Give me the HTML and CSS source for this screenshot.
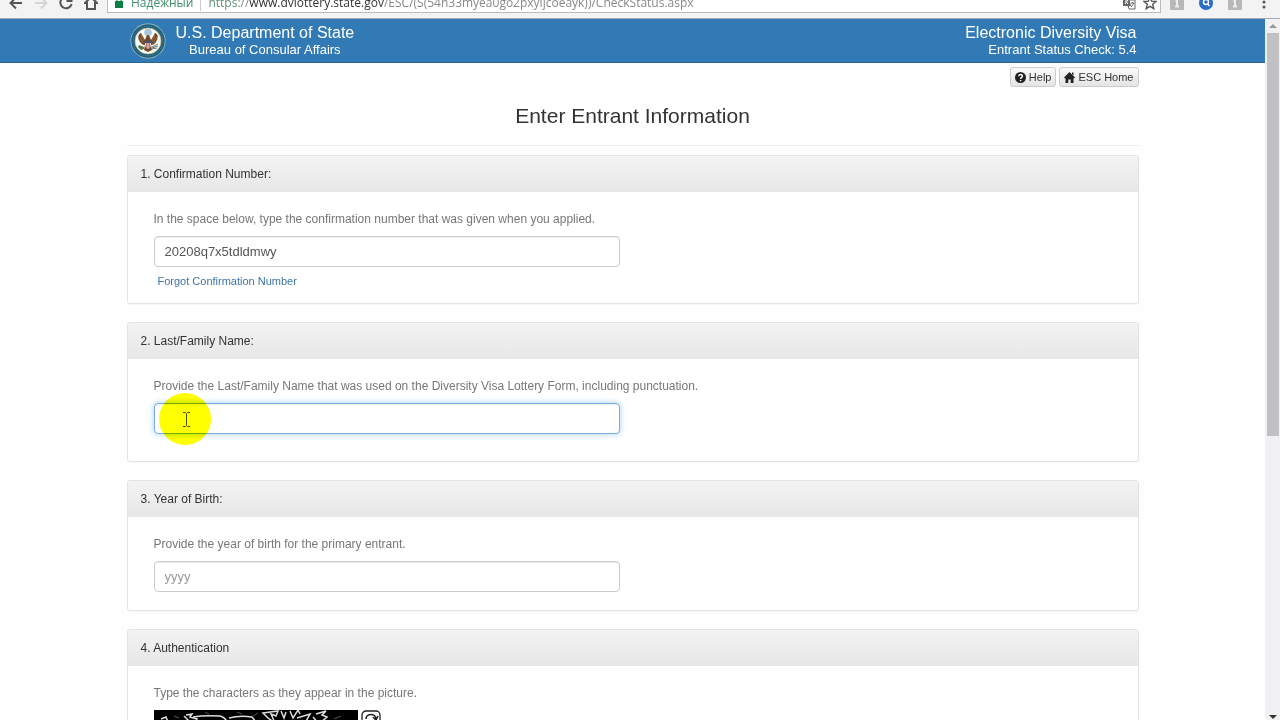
FILE: index.html
```html
<!DOCTYPE html>
<html lang="en">
<head>
  <meta charset="UTF-8">
  <meta name="viewport" content="width=device-width, initial-scale=1.0">
  <title>Entrant Status Check</title>
  <link rel="stylesheet" href="styles.css">
</head>
<body>
  <div class="toolbar">
    <div class="nav-icons">
      <button class="tool-btn" aria-label="Back"><svg width="14" height="14" viewBox="0 0 14 14"><path d="M13 7H2M7 1.500L1.500 7L7 12.500"/></svg></button>
      <button class="tool-btn faded" aria-label="Forward"><svg width="14" height="14" viewBox="0 0 14 14"><path d="M1 7H12M7 1.500L12.500 7L7 12.500"/></svg></button>
      <button class="tool-btn" aria-label="Reload"><svg width="14" height="14" viewBox="0 0 14 14"><path d="M11.500 3A5.700 5.700 0 1 0 12.600 8M12.500 0V5H7.500"/></svg></button>
      <button class="tool-btn" aria-label="Home"><svg width="14" height="14" viewBox="0 0 14 14"><path d="M1 7L7 1L13 7H11V13H3V7Z"/></svg></button>
    </div>
    <div class="omnibox">
      <svg class="lock" width="9" height="12" viewBox="0 0 9 12"><path d="M0 4H8V11H0Z" fill="#0b8043"/><path d="M2 4V2A2 2 0 0 1 6 2V4" fill="none" stroke="#0b8043"/></svg>
      <span class="secure">Надежный</span>
      <span class="divider"></span>
      <span class="url"><span class="scheme">https</span>://<span class="host">www.dvlottery.state.gov</span>/ESC/(S(54n33myea0go2pxyijcoeayk))/CheckStatus.aspx</span>
      <button class="tool-btn" aria-label="Translate"><svg width="14" height="14" viewBox="0 0 14 14"><path d="M5 4H13V13H7Z" fill="#fff" stroke="#666" stroke-width="1"/><path d="M1 1H7L9 10H1Z" fill="#666" stroke="none"/><path d="M3 4H6M4.500 3V4M3 8L6 4M3.500 5L6 8" stroke="#fff" stroke-width="1"/><path d="M9 7H12M10.500 6V7M9 11L12 7" stroke="#666" stroke-width="1"/></svg></button>
      <button class="tool-btn" aria-label="Bookmark"><svg width="14" height="14" viewBox="0 0 14 14"><path d="M7 1L8.700 5.200L13 5.500L9.700 8.300L10.800 12.700L7 10.300L3.200 12.700L4.300 8.300L1 5.500L5.300 5.200Z" stroke-width="1.400"/></svg></button>
    </div>
    <div class="ext-icons">
      <button class="tool-btn" aria-label="Extension"><svg width="14" height="14" viewBox="0 0 14 14"><rect width="14" height="14" rx="1" fill="#b8b8b8" stroke="none"/><path d="M5.500 5H7V10M5 10.500H9" stroke="#eee"/></svg></button>
      <button class="tool-btn" aria-label="Search extension"><svg width="14" height="14" viewBox="0 0 14 14"><circle cx="7" cy="7" r="7" fill="#2b6cc4" stroke="none"/><circle cx="7" cy="6" r="2.500" stroke="#fff" stroke-width="1.400"/><path d="M8.500 8L10.500 10" stroke="#fff" stroke-width="1.400"/></svg></button>
      <button class="tool-btn" aria-label="Extension"><svg width="14" height="14" viewBox="0 0 14 14"><rect width="14" height="14" rx="1" fill="#b8b8b8" stroke="none"/><path d="M5.500 5H7V10M5 10.500H9" stroke="#eee"/></svg></button>
      <button class="tool-btn" aria-label="Menu"><svg width="14" height="14" viewBox="0 0 14 14"><g fill="#555" stroke="none"><circle cx="7" cy="1" r="1.500"/><circle cx="7" cy="6" r="1.500"/><circle cx="7" cy="11" r="1.500"/></g></svg></button>
    </div>
  </div>

  <div class="viewport">
    <div class="page">
      <header class="banner">
        <div class="container banner-row">
          <div class="brand">
            <svg class="seal" width="36" height="36" viewBox="0 0 36 36">
              <circle cx="18" cy="18" r="17.500" fill="#a9cbc4"/>
              <circle cx="18" cy="18" r="16.800" fill="#205f7b"/>
              <circle cx="18" cy="18" r="14.800" fill="none" stroke="#5c909f" stroke-width="1" stroke-dasharray="1 1.500"/>
              <circle cx="18" cy="18" r="13" fill="#fbfbf5" stroke="#c8b887" stroke-width=".7"/>
              <circle cx="18" cy="9.500" r="3.800" fill="#a9c8dc"/>
              <path d="M16.500 13C17 11.500 19.500 11.500 19.500 13.500L21 17L25 10C29 11 28 16 26 19C25 21 23 22 21 22L22 27L18 29L14 27L15 22C12 22 10.500 20 9.500 18C7.500 15 8 11 11 10L15 17Z" fill="#70482d"/>
              <path d="M11 12L14 18M9.500 14L13 20M25 12L22 18M27 14L23 20" stroke="#ae8153" stroke-width=".7"/>
              <path d="M15 18H21V22C21 24 19 25.500 18 26C17 25.500 15 24 15 22Z" fill="#f1dcd8"/>
              <path d="M15 18H21V20H15Z" fill="#36547e"/>
              <path d="M16.500 20V24.500M18 20V26M19.500 20V24.500" stroke="#b94e4d" stroke-width=".8"/>
              <path d="M14 24L9 22L8 24L11 27L14 26Z" fill="#54774f"/>
              <path d="M22 24L28 21M22 25L28 23M22 26L27 25" stroke="#5b6b70" stroke-width=".9"/>
            </svg>
            <div class="brand-text">
              <div class="name">U.S. Department of State</div>
              <div class="sub">Bureau of Consular Affairs</div>
            </div>
          </div>
          <div class="app-title">
            <div class="name">Electronic Diversity Visa</div>
            <div class="sub">Entrant Status Check: 5.4</div>
          </div>
        </div>
      </header>

      <main class="container">
        <div class="actions">
          <button class="btn"><svg width="11" height="11" viewBox="0 0 11 11"><circle cx="5.500" cy="5.500" r="5.500" fill="#222"/><path d="M3.700 4.200C3.700 1.900 7.400 1.900 7.400 4.100C7.400 5.400 5.600 5.300 5.600 6.900M5.600 7.900V9.200" fill="none" stroke="#fff" stroke-width="1.400"/></svg>Help</button>
          <button class="btn"><svg width="11" height="11" viewBox="0 0 11 11"><path d="M5.500 0L11 5.500L10 6.500L9.500 6V11H6.700V7.500H4.300V11H1.500V6L1 6.500L0 5.500ZM8 .5H9.500V3.500L8 2Z" fill="#222"/></svg>ESC Home</button>
        </div>
        <h1>Enter Entrant Information</h1>

        <form>
          <section class="panel">
            <h2 class="panel-heading">1. Confirmation Number:</h2>
            <div class="panel-body has-link">
              <div class="hint"><label for="confirmation">In the space below, type the confirmation number that was given when you applied.</label></div>
              <div class="field">
                <input type="text" id="confirmation" value="20208q7x5tdldmwy">
                <a class="forgot" href="#">Forgot Confirmation Number</a>
              </div>
            </div>
          </section>

          <section class="panel">
            <h2 class="panel-heading">2. Last/Family Name:</h2>
            <div class="panel-body has-message">
              <div class="hint"><label for="lastname">Provide the Last/Family Name that was used on the Diversity Visa Lottery Form, including punctuation.</label></div>
              <div class="field">
                <input type="text" id="lastname" class="focused">
                <div class="pointer">
                  <svg width="7" height="15" viewBox="0 0 7 15"><path d="M0 .5H2.500L3.500 1.500L4.500 .5H7M3.500 1.500V13.500M0 14.500H2.500L3.500 13.500L4.500 14.500H7" fill="none" stroke="#4d4d00"/></svg>
                </div>
              </div>
            </div>
          </section>

          <section class="panel">
            <h2 class="panel-heading">3. Year of Birth:</h2>
            <div class="panel-body">
              <div class="hint"><label for="birthyear">Provide the year of birth for the primary entrant.</label></div>
              <div class="field">
                <input type="text" id="birthyear" placeholder="yyyy">
              </div>
            </div>
          </section>

          <section class="panel">
            <h2 class="panel-heading">4. Authentication</h2>
            <div class="panel-body">
              <div class="hint">Type the characters as they appear in the picture.</div>
              <div class="field captcha">
                <svg width="204" height="50" viewBox="0 0 204 50">
                  <rect width="204" height="50" fill="#000"/>
                  <g fill="none" stroke="#ddd" stroke-width="1.500">
                    <path d="M7 9L12 7L14 12M32 5L38 4L36 7L43 9L40 14L35 11L30 6"/>
                    <path d="M39 7Q50 5 66 6Q71 7 73 12M75 8Q86 5 98 7L102 12M48 14H62M81 14L92 11"/>
                    <path d="M109 3L124 1L122 6L117 4L121 13L114 8ZM127 1L130 8L132 2M136 1L139 8L144 0L146 4"/>
                    <path d="M143 8L156 4L151 13M162 4L172 1L168 5L173 7L165 14L159 7"/>
                  </g>
                  <path d="M20 6L25 8M51 2L55 4M83 2L88 4M99 6L104 3M180 9L187 6" stroke="#555"/>
                </svg>
                <button type="button" class="captcha-help" aria-label="New picture"><svg width="20" height="20" viewBox="0 0 20 20"><rect x="1" y="1" width="18" height="18" rx="4" fill="#fff" stroke="#222" stroke-width="1.300"/><path d="M5 9C5 3 15 3 15 9M12 7L15 10L17 6M15 11C15 17 5 17 5 11" fill="none" stroke="#222" stroke-width="1.600"/></svg></button>
              </div>
            </div>
          </section>
        </form>
      </main>
    </div>

    <div class="scrollbar">
      <span class="arrow up"></span>
      <span class="thumb"></span>
      <span class="arrow down"></span>
    </div>
  </div>
</body>
</html>
```

FILE: styles.css
```css
* { box-sizing: border-box; }

body {
  margin: 0;
  height: 100vh;
  display: flex;
  flex-direction: column;
  overflow: hidden;
  font-family: "Liberation Sans", Arial, sans-serif;
  font-size: 12px;
  line-height: 18px;
  color: #333;
  background: #fefefe;
}

svg { display: block; }

/* browser toolbar */
.toolbar {
  display: flex;
  align-items: flex-end;
  flex: none;
  height: 19px;
  padding: 0 9px 5px;
  overflow: hidden;
  background: #f3f3f3;
  border-bottom: 1px solid #a5abb0;
}
.nav-icons,
.ext-icons {
  display: flex;
  align-items: center;
  height: 20px;
}
.nav-icons { gap: 11px; margin-right: 9px; }
.ext-icons { gap: 15px; margin-left: 9px; }
.tool-btn {
  padding: 0;
  border: 0;
  background: none;
}
.tool-btn svg {
  fill: none;
  stroke: #555;
  stroke-width: 2;
}
.tool-btn.faded svg { stroke: #d5d5d5; }
.omnibox {
  flex: 1;
  display: flex;
  align-items: center;
  gap: 7px;
  height: 20px;
  padding: 0 3px 0 7px;
  background: #fff;
  border: 1px solid #bbb;
  font-family: "Open Sans", "Noto Sans", sans-serif;
  white-space: nowrap;
  color: #888;
}
.secure { color: #3f9068; }
.divider {
  width: 1px;
  height: 16px;
  background: #ccc;
}
.url { flex: 1; }
.scheme { color: #5f8f78; }
.host { color: #333; }

/* page area and scrollbar */
.viewport {
  display: flex;
  flex: 1;
  min-height: 0;
}
.page {
  flex: 1;
  overflow: hidden;
}
.scrollbar {
  display: flex;
  flex-direction: column;
  align-items: center;
  width: 15px;
  padding: 5px 0 1px;
  background: #f1f0f2;
}
.arrow {
  border: 4px solid transparent;
}
.arrow.up {
  border-top: 0;
  border-bottom-color: #999;
}
.arrow.down {
  margin-top: auto;
  border-bottom: 0;
  border-top-color: #333;
}
.thumb {
  width: 12px;
  height: 58%;
  margin-top: 5px;
  background: #c1c0c2;
}

.container {
  width: 80%;
  margin: 0 auto;
}

/* header */
.banner {
  background: #317ab5;
  border-bottom: 1px solid #2a658f;
  color: #fff;
}
.banner-row {
  display: flex;
  justify-content: space-between;
  align-items: center;
  height: 43px;
  padding: 0 2px 0 3px;
}
.brand {
  display: flex;
  align-items: center;
  gap: 10px;
}
.brand-text { text-align: center; }
.app-title { text-align: right; }
.name {
  font-size: 16px;
  line-height: 18px;
}
.sub {
  font-size: 13px;
  line-height: 16px;
}

/* title */
.actions {
  display: flex;
  justify-content: flex-end;
  gap: 3px;
  padding-top: 4px;
}
.btn {
  display: flex;
  align-items: center;
  gap: 3px;
  height: 20px;
  padding: 0 4px;
  font-family: inherit;
  font-size: 11px;
  color: #333;
  background: linear-gradient(#fafafa, #e4e4e6);
  border: 1px solid #ccc;
  border-radius: 3px;
}
h1 {
  margin: 0 0 9px;
  padding: 15px 0;
  font-size: 21px;
  font-weight: normal;
  line-height: 28px;
  text-align: center;
  border-bottom: 1px solid #eee;
}

/* panels */
.panel {
  margin-bottom: 18px;
  background: #fff;
  border: 1px solid #e5e1e5;
  border-radius: 3px;
  box-shadow: 0 1px 1px rgba(0, 0, 0, 0.03);
}
.panel-heading {
  margin: 0;
  padding: 9px 13px;
  font-size: 12px;
  font-weight: normal;
  line-height: 18px;
  background: linear-gradient(#f4f3f4, #e8e7e8);
}
.panel-body { padding: 18px 13px; }
.panel-body.has-link { padding-bottom: 13px; }
.panel-body.has-message { padding-bottom: 27px; }
.hint {
  padding: 0 13px;
  margin-bottom: 8px;
  color: #777;
}
.field {
  position: relative;
  width: 50%;
  padding: 0 13px;
}
.field input {
  display: block;
  width: 100%;
  height: 31px;
  padding: 0 10px;
  font-family: inherit;
  font-size: 13px;
  color: #555;
  background: #fff;
  border: 1px solid #ccc;
  border-radius: 4px;
  box-shadow: inset 0 1px 1px rgba(0, 0, 0, 0.07);
  outline: none;
}
.field input::placeholder { color: #999; }
.field input.focused {
  border-color: #79aede;
  box-shadow: inset 0 1px 1px rgba(0, 0, 0, 0.07), 0 0 6px rgba(102, 175, 233, 0.6);
}
.forgot {
  display: block;
  margin-top: 5px;
  padding-left: 4px;
  font-size: 11px;
  color: #3e74a5;
  text-decoration: none;
}
.pointer {
  position: absolute;
  left: 18px;
  top: -10px;
  display: flex;
  align-items: center;
  justify-content: center;
  width: 52px;
  height: 52px;
  padding-left: 4px;
  border-radius: 50%;
  background: #ff0;
  mix-blend-mode: multiply;
}
.captcha {
  display: flex;
  gap: 3px;
  align-items: flex-start;
}
.captcha-help {
  padding: 0;
  border: 0;
  background: none;
}
```
